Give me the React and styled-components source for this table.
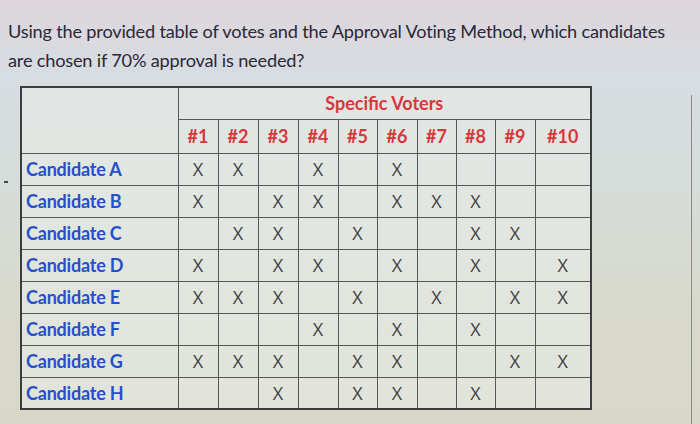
import React from "react";
import styled, { createGlobalStyle } from "styled-components";

const Global = createGlobalStyle`
  html, body { margin: 0; padding: 0; }
  body {
    width: 700px;
    height: 424px;
    overflow: hidden;
    background: linear-gradient(180deg, #ddd5dc 0%, #d7dde1 18%, #d6dcd8 45%, #d8d9cc 75%, #d9d8c8 100%);
    font-family: Lato, "Open Sans", sans-serif;
  }
`;

const Page = styled.div`
  position: relative;
  width: 700px;
  height: 424px;
  display: flex;
  flex-direction: column;
  padding: 17px 0 0 8px;
  box-sizing: border-box;
`;

const Question = styled.p`
  margin: 0;
  font-size: 18.2px;
  line-height: 29px;
  color: #2b2838;
  letter-spacing: -0.2px;
  width: 690px;
`;

const Table = styled.table`
  margin: 11px 0 0 12px;
  border-collapse: collapse;
  border: 2px solid #3d3d40;
  background: rgba(232, 236, 232, 0.6);
  table-layout: fixed;
  width: 570px;
`;

const Cell = styled.td`
  border: 1.5px solid #56575a;
  height: ${(p) => p.$h || 32}px;
  padding: 0;
  text-align: center;
  vertical-align: middle;
  box-sizing: border-box;
`;

const Head = styled(Cell)`
  color: #d8373b;
  font-weight: 700;
  font-size: 18px;
  letter-spacing: 0;
`;

const Label = styled(Cell)`
  text-align: left;
  padding-left: 4px;
  color: #2550cc;
  font-weight: 700;
  font-size: 18px;
  letter-spacing: -0.2px;
  white-space: nowrap;
`;

const Mark = styled(Cell)`
  color: #3f3f44;
  font-family: "Open Sans", Lato, sans-serif;
  font-weight: 400;
  font-size: 18px;
`;

const Dash = styled.span`
  position: absolute;
  left: 4px;
  top: 181px;
  width: 4px;
  height: 2px;
  background: #444;
`;

const EdgeLine = styled.span`
  position: absolute;
  left: 691px;
  top: 95px;
  width: 1px;
  height: 329px;
  background: #8a8a8a;
`;

const widths = [157, 40, 40, 40, 40, 39, 40, 39, 39, 40, 56];

const rows = [
  ["Candidate A", [1, 2, 4, 6]],
  ["Candidate B", [1, 3, 4, 6, 7, 8]],
  ["Candidate C", [2, 3, 5, 8, 9]],
  ["Candidate D", [1, 3, 4, 6, 8, 10]],
  ["Candidate E", [1, 2, 3, 5, 7, 9, 10]],
  ["Candidate F", [4, 6, 8]],
  ["Candidate G", [1, 2, 3, 5, 6, 9, 10]],
  ["Candidate H", [3, 5, 6, 8]],
];

const voters = [1, 2, 3, 4, 5, 6, 7, 8, 9, 10];

export default function App() {
  return (
    <>
      <Global />
      <Page>
        <Question>
          Using the provided table of votes and the Approval Voting Method, which candidates
          <br />
          are chosen if 70% approval is needed?
        </Question>
        <Table>
          <colgroup>
            {widths.map((w, i) => (
              <col key={i} style={{ width: w }} />
            ))}
          </colgroup>
          <tbody>
            <tr>
              <Cell rowSpan={2} />
              <Head colSpan={10} $h={32}>Specific Voters</Head>
            </tr>
            <tr>
              {voters.map((v) => (
                <Head key={v} $h={34}>#{v}</Head>
              ))}
            </tr>
            {rows.map(([name, marks]) => (
              <tr key={name}>
                <Label>{name}</Label>
                {voters.map((v) => (
                  <Mark key={v}>{marks.includes(v) ? "X" : ""}</Mark>
                ))}
              </tr>
            ))}
          </tbody>
        </Table>
        <Dash />
        <EdgeLine />
      </Page>
    </>
  );
}
